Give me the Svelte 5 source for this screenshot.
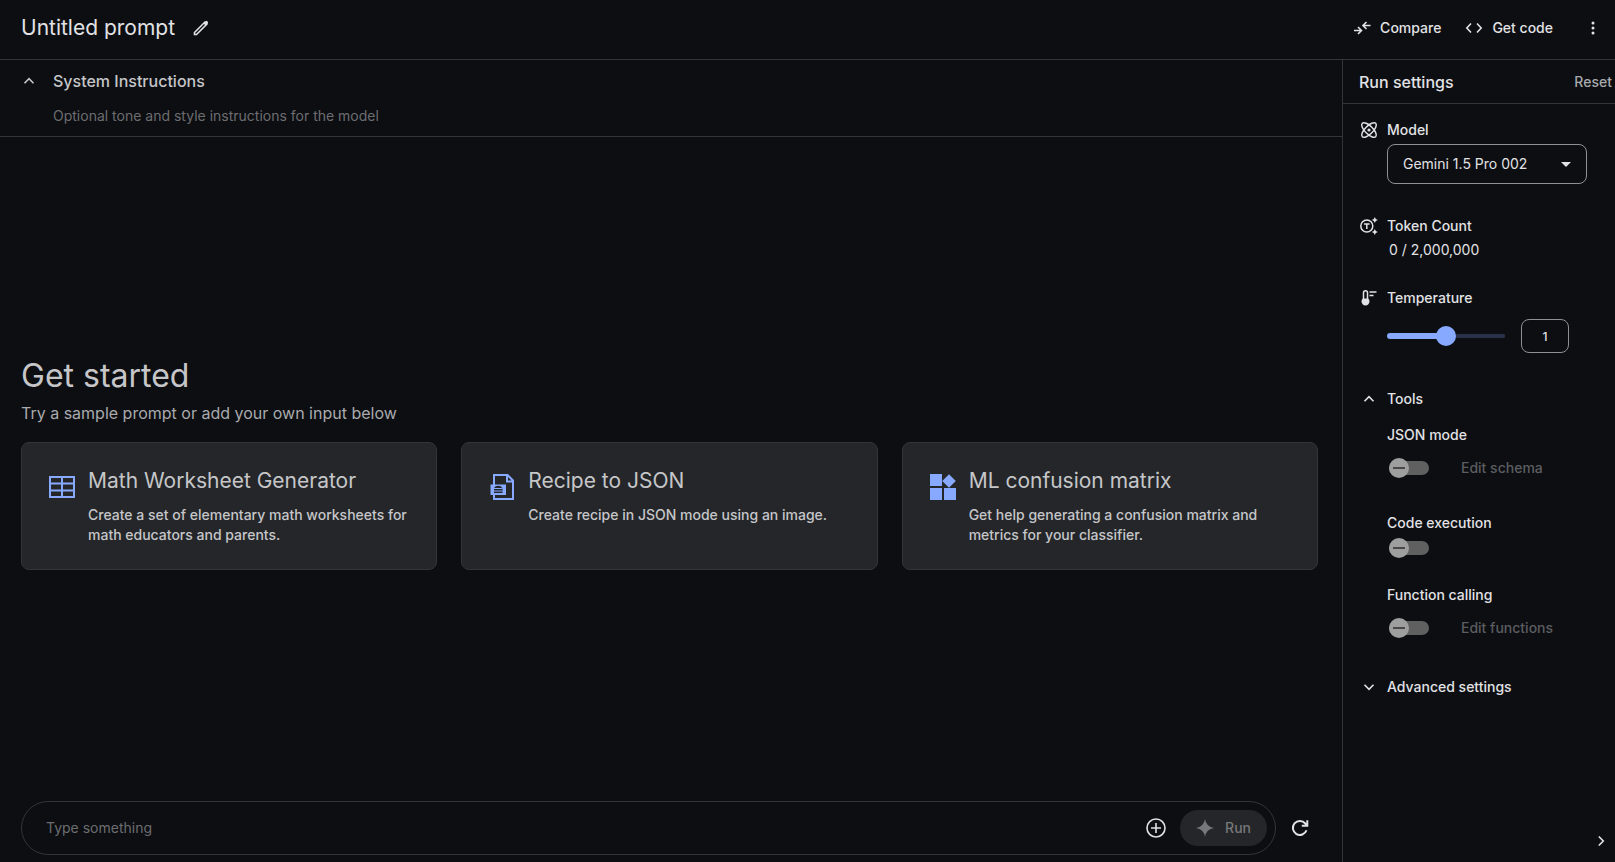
<script>
  let title = $state('Untitled prompt');
  let systemInstructions = $state('');
  let prompt = $state('');
  let model = $state('Gemini 1.5 Pro 002');
  let temperature = $state(1);
  let systemOpen = $state(true);
  let toolsOpen = $state(true);
  let advancedOpen = $state(false);

  const maxTemperature = 2;
  const models = ['Gemini 1.5 Pro 002', 'Gemini 1.5 Flash 002'];

  const samples = [
    {
      icon: 'table',
      title: 'Math Worksheet Generator',
      text: 'Create a set of elementary math worksheets for math educators and parents.'
    },
    {
      icon: 'file',
      title: 'Recipe to JSON',
      text: 'Create recipe in JSON mode using an image.'
    },
    {
      icon: 'widgets',
      title: 'ML confusion matrix',
      text: 'Get help generating a confusion matrix and metrics for your classifier.'
    }
  ];

  const tools = [
    { id: 'json', label: 'JSON mode', action: 'Edit schema' },
    { id: 'code', label: 'Code execution' },
    { id: 'functions', label: 'Function calling', action: 'Edit functions' }
  ];
</script>

{#snippet chevron(direction)}
  <svg class="chevron {direction}" viewBox="0 0 16 16" aria-hidden="true">
    <path d="M3.5 10.2 8 5.7l4.5 4.5" />
  </svg>
{/snippet}

<div class="app">
  <header class="topbar">
    <h1>{title}</h1>
    <button class="icon-btn" aria-label="Edit title">
      <svg width="16" height="16" viewBox="0 0 16 16" aria-hidden="true">
        <path class="line" d="M1.5 14.5v-2L11.700 2.300l2 2L3.500 14.500z" />
        <path class="solid" d="m10.300 3.300 2-2q1-.9 2 0l.4.400q.9 1 0 2l-2 2z" />
      </svg>
    </button>
    <div class="actions">
      <button class="action">
        <svg width="18" height="18" viewBox="0 0 18 18" aria-hidden="true">
          <path class="line" d="M1 11.500h7M5 8l3.500 3.500L5 15M17.500 6.500h-7M13.500 3 10 6.500l3.500 3.500" />
        </svg>
        Compare
      </button>
      <button class="action">
        <svg width="18" height="18" viewBox="0 0 18 18" aria-hidden="true">
          <path class="line" d="M6 4.500 1.800 9 6 13.500M12 4.500 16.200 9 12 13.500" />
        </svg>
        Get code
      </button>
      <button class="icon-btn more" aria-label="More options">
        <svg width="16" height="16" viewBox="0 0 16 16" aria-hidden="true">
          <circle class="solid" cx="8" cy="3" r="1.5" />
          <circle class="solid" cx="8" cy="8" r="1.5" />
          <circle class="solid" cx="8" cy="13" r="1.5" />
        </svg>
      </button>
    </div>
  </header>

  <div class="body">
    <main class="workspace">
      <section class="system">
        <button class="system-toggle" aria-expanded={systemOpen} onclick={() => (systemOpen = !systemOpen)}>
          {@render chevron(systemOpen ? 'up' : 'down')}
          <span>System Instructions</span>
        </button>
        {#if systemOpen}
          <textarea
            rows="1"
            aria-label="System Instructions"
            placeholder="Optional tone and style instructions for the model"
            bind:value={systemInstructions}
          ></textarea>
        {/if}
      </section>

      <section class="start">
        <h2>Get started</h2>
        <p class="lead">Try a sample prompt or add your own input below</p>
        <div class="cards">
          {#each samples as sample}
            <button class="card">
              <svg class="card-icon" viewBox="0 0 26 26" aria-hidden="true">
                {#if sample.icon === 'table'}
                  <path d="M1 3h24v20H1zM1 9.500h24M1 16.500h24M13 3v20" />
                {:else if sample.icon === 'file'}
                  <path d="M5 11V1h13.500L24 6.500V25H5v-5M18 1v6.500h6" />
                  <path class="fill" fill-rule="evenodd" d="M1.500 10.500H17V21H1.500zM5 14v5h8.500v-5Q12 11.800 9.200 11.800T5 14z" />
                  <path class="thin" d="M5 14.500h8.500M5 17h8.500" />
                {:else}
                  <path class="fill" d="M0 0h12v12H0zM0 14h12v12H0zM14 14h12v12H14zM19 .2 25.800 7 19 13.800 12.200 7z" />
                {/if}
              </svg>
              <span class="card-body">
                <span class="card-title">{sample.title}</span>
                <span class="card-text">{sample.text}</span>
              </span>
            </button>
          {/each}
        </div>
      </section>

      <form class="composer" onsubmit={(e) => e.preventDefault()}>
        <div class="prompt-box">
          <input type="text" aria-label="Prompt" placeholder="Type something" bind:value={prompt} />
          <button type="button" class="icon-btn" aria-label="Insert media">
            <svg width="20" height="20" viewBox="0 0 20 20" aria-hidden="true">
              <circle class="line" cx="10" cy="10" r="9" />
              <path class="line" d="M10 5v10M5 10h10" />
            </svg>
          </button>
          <button type="submit" class="run" disabled={!prompt}>
            <svg width="18" height="18" viewBox="0 0 18 18" aria-hidden="true">
              <path class="solid" d="M9 0q1.2 7.8 9 9-7.8 1.2-9 9-1.2-7.8-9-9 7.8-1.2 9-9z" />
            </svg>
            Run
          </button>
        </div>
        <button type="button" class="icon-btn" aria-label="Refresh">
          <svg width="18" height="18" viewBox="0 0 18 18" aria-hidden="true">
            <path class="line bold" d="M15.500 11.200A7 7 0 1 1 14.300 4.500l2 2M16.300 1.200v5.500h-5.500" />
          </svg>
        </button>
      </form>
    </main>

    <aside class="settings">
      <div class="settings-head">
        <h2>Run settings</h2>
        <button class="reset">Reset</button>
      </div>

      <div class="settings-body">
        <div class="setting">
          <svg class="setting-icon" viewBox="0 0 18 18" aria-hidden="true">
            <ellipse cx="9" cy="9" rx="9.500" ry="4" transform="rotate(45 9 9)" />
            <ellipse cx="9" cy="9" rx="9.500" ry="4" transform="rotate(-45 9 9)" />
            <circle class="solid" cx="9" cy="9" r="1.600" />
          </svg>
          <div class="setting-main">
            <label class="setting-label" for="model">Model</label>
            <div class="select">
              <select id="model" bind:value={model}>
                {#each models as name}
                  <option>{name}</option>
                {/each}
              </select>
              <svg width="10" height="6" viewBox="0 0 10 6" aria-hidden="true">
                <path class="solid" d="M0 0h10L5 5z" />
              </svg>
            </div>
          </div>
        </div>

        <div class="setting">
          <svg class="setting-icon" viewBox="0 0 18 18" aria-hidden="true">
            <circle cx="6.800" cy="9" r="6" />
            <path d="M4 7h5.600M6.800 7v5" />
            <path class="solid" d="M14.800 0q.5 2.500 3 3-2.500.5-3 3-.5-2.500-3-3 2.500-.5 3-3zM14.800 12q.5 2.500 3 3-2.500.5-3 3-.5-2.500-3-3 2.500-.5 3-3z" />
          </svg>
          <div class="setting-main">
            <span class="setting-label">Token Count</span>
            <span class="tokens">0 / 2,000,000</span>
          </div>
        </div>

        <div class="setting">
          <svg class="setting-icon" viewBox="0 0 18 18" aria-hidden="true">
            <path d="M3.500 10V3.800a2 2 0 0 1 4 0V10" />
            <path class="solid" d="M2.800 9.500h5.400a4 4 0 1 1-5.400 0z" />
            <path d="M9.500 3h7M9.500 6.500h4" />
          </svg>
          <div class="setting-main">
            <label class="setting-label" for="temperature">Temperature</label>
            <div class="slider-row">
              <input
                id="temperature"
                type="range"
                min="0"
                max={maxTemperature}
                step="0.05"
                style="--fill: {(temperature / maxTemperature) * 100}%"
                bind:value={temperature}
              />
              <input class="number" type="text" inputmode="decimal" aria-label="Temperature value" bind:value={temperature} />
            </div>
          </div>
        </div>

        <button class="group-toggle" aria-expanded={toolsOpen} onclick={() => (toolsOpen = !toolsOpen)}>
          {@render chevron(toolsOpen ? 'up' : 'down')}
          <span>Tools</span>
        </button>
        {#if toolsOpen}
          <div class="tools">
            {#each tools as tool}
              <div class="tool">
                <label for={tool.id}>{tool.label}</label>
                <div class="tool-row" class:tall={tool.action}>
                  <input id={tool.id} class="switch" type="checkbox" role="switch" />
                  {#if tool.action}
                    <button class="tool-action" disabled>{tool.action}</button>
                  {/if}
                </div>
              </div>
            {/each}
          </div>
        {/if}

        <button class="group-toggle" aria-expanded={advancedOpen} onclick={() => (advancedOpen = !advancedOpen)}>
          {@render chevron(advancedOpen ? 'up' : 'down')}
          <span>Advanced settings</span>
        </button>
      </div>

      <button class="icon-btn collapse" aria-label="Collapse panel">
        {@render chevron('right')}
      </button>
    </aside>
  </div>
</div>

<style>
  :global(body) { background: #0c0e12; }

  .app {
    --line: #333539;
    --text: #e2e2e5;
    --soft: #c6c6c9;
    --muted: #6c6d70;
    --accent: #87a9ff;
    display: flex; flex-direction: column; min-height: 100vh;
    background: #0c0e12; color: var(--text);
    font-family: Inter, Roboto, sans-serif; font-size: 14px; line-height: 20px;
  }
  .app :global(*) { box-sizing: border-box; }
  h1, h2, p { margin: 0; font-weight: 400; }
  button, input, select, textarea { font: inherit; color: inherit; }
  button { padding: 0; border: 0; background: none; cursor: pointer; text-align: left; }
  button:disabled { cursor: default; }
  svg { display: block; flex-shrink: 0; }
  .line { fill: none; stroke: currentColor; stroke-width: 1.6; }
  .bold { stroke-width: 2; }
  .solid { fill: currentColor; stroke: none; }
  .icon-btn { display: flex; align-items: center; justify-content: center; }

  .chevron { width: 16px; height: 16px; fill: none; stroke: currentColor; stroke-width: 1.6; }
  .chevron.down { transform: rotate(180deg); }
  .chevron.right { transform: rotate(90deg); }

  .topbar {
    display: flex; align-items: center; gap: 18px;
    height: 60px; padding: 0 14px 4px 21px;
    border-bottom: 1px solid var(--line);
  }
  .topbar h1 { font-size: 21px; line-height: 28px; }
  .actions { display: flex; align-items: center; gap: 24px; margin-left: auto; }
  .action { display: flex; align-items: center; gap: 9px; font-weight: 500; }
  .more { margin-left: 8px; }

  .body { flex: 1; display: flex; }
  .workspace { flex: 1; min-width: 0; display: flex; flex-direction: column; }

  .system {
    display: flex; flex-direction: column;
    padding: 10px 21px 10px; border-bottom: 1px solid var(--line);
  }
  .system-toggle {
    display: flex; align-items: center; gap: 16px;
    font-size: 16px; line-height: 22px; font-weight: 500; color: var(--soft);
  }
  .system textarea {
    display: block; margin: 14px 0 0 32px; padding: 0;
    border: 0; outline: 0; background: none; resize: none; overflow: hidden;
  }
  ::placeholder { color: var(--muted); opacity: 1; }

  .start { flex: 1; display: flex; flex-direction: column; justify-content: center; padding: 0 24px 0 21px; }
  .start h2 { font-size: 32px; line-height: 40px; color: var(--soft); }
  .lead { margin-top: 5px; font-size: 16px; line-height: 24px; color: #a9aaad; }
  .cards { display: grid; grid-template-columns: repeat(3, 1fr); gap: 24px; margin-top: 17px; }
  .card {
    display: flex; align-items: flex-start; gap: 13px;
    min-height: 128px; padding: 24px 27px;
    background: #242629; border: 1px solid var(--line); border-radius: 8px;
  }
  .card-icon { width: 26px; height: 26px; margin-top: 7px; fill: none; stroke: var(--accent); stroke-width: 2; }
  .card-icon .fill { fill: var(--accent); stroke: none; }
  .card-icon .thin { stroke-width: 1; }
  .card-body { display: flex; flex-direction: column; gap: 10px; color: var(--soft); }
  .card-title { font-size: 21px; line-height: 28px; }
  .card-text { font-weight: 500; }

  .composer { display: flex; align-items: center; gap: 15px; padding: 12px 33px 7px 21px; }
  .prompt-box {
    flex: 1; display: flex; align-items: center; gap: 14px;
    height: 54px; padding: 0 8px 0 24px;
    border: 1px solid var(--line); border-radius: 27px;
  }
  .prompt-box input { flex: 1; min-width: 0; padding: 0; border: 0; outline: 0; background: none; }
  .run {
    display: flex; align-items: center; gap: 11px;
    height: 36px; padding: 0 16px; border-radius: 18px;
    background: #242629; color: #77787a; font-weight: 500;
  }

  .settings { width: 273px; display: flex; flex-direction: column; border-left: 1px solid var(--line); }
  .settings-head {
    display: flex; align-items: center; justify-content: space-between;
    height: 44px; padding: 0 3px 0 16px; border-bottom: 1px solid var(--line);
  }
  .settings-head h2 { font-size: 16px; line-height: 24px; font-weight: 500; }
  .reset { color: #a9aaad; font-weight: 500; }
  .settings-body { flex: 1; display: flex; flex-direction: column; padding: 16px 0 0 17px; }

  .setting { display: flex; align-items: flex-start; gap: 9px; margin-bottom: 28px; }
  .setting-icon { width: 18px; height: 18px; margin-top: 1px; fill: none; stroke: currentColor; stroke-width: 1.5; overflow: visible; }
  .setting-main { display: flex; flex-direction: column; gap: 4px; }
  .setting-label { font-weight: 500; }
  .tokens { padding-left: 2px; }

  .select { position: relative; width: 200px; margin-bottom: 4px; }
  .select select {
    display: block; width: 100%; height: 40px; padding: 0 32px 0 15px;
    appearance: none; background: none; border: 1px solid #8e9094; border-radius: 8px;
  }
  .select option { background: #242629; }
  .select svg { position: absolute; right: 16px; top: 18px; pointer-events: none; }

  .slider-row { display: flex; align-items: center; gap: 16px; margin: 7px 0 8px; }
  input[type='range'] {
    width: 118px; height: 20px; margin: 0; appearance: none; background: none;
  }
  input[type='range']::-webkit-slider-runnable-track {
    height: 6px; border-radius: 3px;
    background:
      linear-gradient(var(--accent), var(--accent)) left center / var(--fill) 6px no-repeat,
      linear-gradient(#28324a, #28324a) center / 100% 4px no-repeat;
  }
  input[type='range']::-webkit-slider-thumb {
    appearance: none; width: 20px; height: 20px; margin-top: -7px;
    border-radius: 50%; background: var(--accent);
  }
  .number {
    width: 48px; height: 34px; padding: 0; text-align: center; font-size: 12px; font-weight: 500;
    background: none; border: 1px solid #8e9094; border-radius: 8px;
  }

  .group-toggle { display: flex; align-items: center; gap: 10px; font-weight: 500; }
  .group-toggle .chevron { margin-left: 1px; }
  .tools { display: flex; flex-direction: column; gap: 22px; padding: 16px 0 26px 27px; }
  .tool { display: flex; flex-direction: column; font-weight: 500; }
  .tool-row { display: flex; align-items: center; gap: 32px; min-height: 30px; padding-left: 2px; }
  .tool-row.tall { min-height: 46px; }
  .tool-action { color: #5c5d60; }

  .switch {
    position: relative; width: 40px; height: 14px; margin: 0; appearance: none;
    background: #606060; border-radius: 7px;
  }
  .switch::before {
    content: ''; position: absolute; left: 0; top: -3px; width: 20px; height: 20px;
    border-radius: 50%;
    background: linear-gradient(#494949, #494949) center / 12px 2px no-repeat, #9e9e9e;
  }
  .switch:checked::before { left: 20px; }

  .collapse { align-self: flex-end; padding: 0 6px 13px 0; }
</style>
